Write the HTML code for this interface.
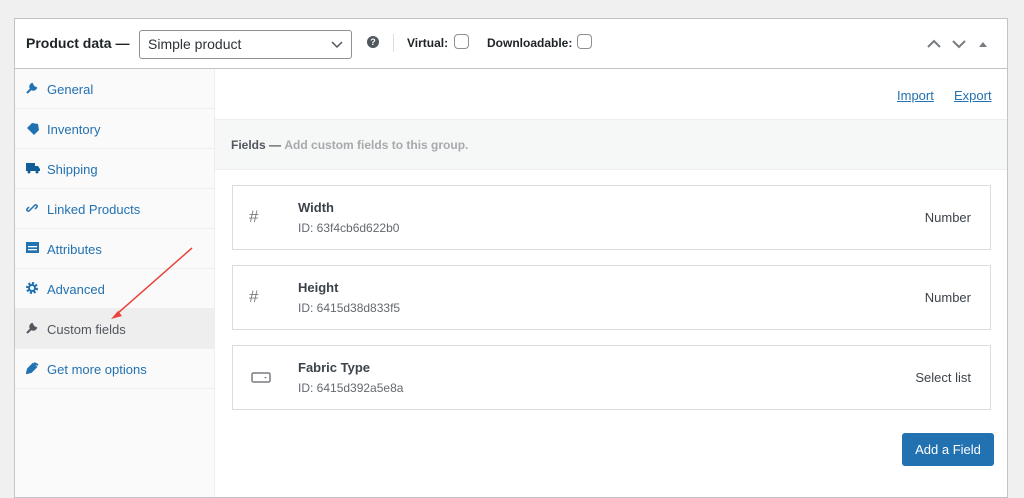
<!DOCTYPE html>
<html><head><style>
*{box-sizing:border-box;margin:0;padding:0}
body{width:1024px;height:485px;background:#f0f0f1;font-family:"Liberation Sans",sans-serif;font-size:13px;color:#3c434a;position:relative;overflow:hidden}
.panel{position:absolute;left:14px;top:18px;width:994px;height:480px;background:#fff;border:1px solid #c3c4c7}
.hdr{position:absolute;left:0;top:0;right:0;height:50px;border-bottom:1px solid #c3c4c7}
.abs{position:absolute}
.side{position:absolute;left:0;top:50px;width:200px;bottom:0;background:#fafafa;border-right:1px solid #eee}
.item{height:40px;border-bottom:1px solid #eee;color:#2271b1;font-size:13px;line-height:42px;padding-left:32px;position:relative}
.item svg{position:absolute;left:11px;top:13px}
.item.act{background:#eee;color:#50575e}
.card{position:absolute;left:217px;width:759px;height:65px;border:1px solid #dcdcde;background:#fff}
.card .t{position:absolute;left:65px;top:14px;font-weight:bold;font-size:13px;color:#3c434a}
.card .id{position:absolute;left:65px;top:35px;font-size:12px;color:#646970}
.card .ty{position:absolute;right:19px;top:24px;font-size:13px;color:#3c434a}
.card .ic{position:absolute;left:16px;top:21px;font-size:17px;color:#787c82}
</style></head><body>
<div class="panel">
 <div class="hdr">
  <div class="abs" style="left:11px;top:16px;font-weight:bold;font-size:14px;color:#1d2327">Product data —</div>
  <div class="abs" style="left:124px;top:11px;width:213px;height:29px;border:1px solid #8c8f94;border-radius:3px;font-size:14px;line-height:27px;padding-left:8px;color:#2c3338">Simple product
   <svg class="abs" style="right:8px;top:10px" width="12" height="8" viewBox="0 0 12 8"><path d="M1 1l5 5 5-5" stroke="#50575e" stroke-width="1.5" fill="none"/></svg></div>
  <div class="abs" style="left:352px;top:17px;width:12px;height:12px;border-radius:6px;background:#50575e;color:#fff;font-size:9px;font-weight:bold;text-align:center;line-height:12px">?</div>
  <div class="abs" style="left:378px;top:15px;width:1px;height:18px;background:#dcdcde"></div>
  <div class="abs" style="left:392px;top:17px;font-size:12px;font-weight:bold;color:#1d2327">Virtual:</div>
  <div class="abs" style="left:439px;top:15px;width:15px;height:15px;border:1px solid #8c8f94;border-radius:4px"></div>
  <div class="abs" style="left:472px;top:17px;font-size:12px;font-weight:bold;color:#1d2327">Downloadable:</div>
  <div class="abs" style="left:562px;top:15px;width:15px;height:15px;border:1px solid #8c8f94;border-radius:4px"></div>
  <svg class="abs" style="left:912px;top:20px" width="60" height="10" viewBox="0 0 60 10"><path d="M1 8l6-6 6 6M26 2l6 6 6-6" stroke="#787c82" stroke-width="2" fill="none"/><path d="M52 8l4-5 4 5z" fill="#787c82"/></svg>
 </div>
 <div class="side">
  <div class="item"><svg width="12" height="12" viewBox="0 0 12 12"><path d="M1 11l6-6M6 2a3 3 0 104 4L8 5 7 4z" stroke="#2271b1" stroke-width="2" fill="#2271b1"/></svg>General</div>
  <div class="item"><svg width="13" height="13" viewBox="0 0 13 13"><path d="M1 6l5-5 6 1 1 6-5 5z" fill="#2271b1"/></svg>Inventory</div>
  <div class="item"><svg width="14" height="12" viewBox="0 0 14 12"><path d="M0 1h9v8H0zM9 4h3l2 3v2H9z" fill="#135e96"/><circle cx="3" cy="10" r="1.5" fill="#135e96"/><circle cx="11" cy="10" r="1.5" fill="#135e96"/></svg>Shipping</div>
  <div class="item"><svg width="12" height="12" viewBox="0 0 12 12"><path d="M5 7l-2 2a1.5 1.5 0 01-2-2l2-2M7 5l2-2a1.5 1.5 0 012 2L9 7M4 8l4-4" stroke="#2271b1" stroke-width="1.5" fill="none"/></svg>Linked Products</div>
  <div class="item"><svg width="13" height="11" viewBox="0 0 13 11"><rect width="13" height="11" fill="#2271b1"/><rect x="2" y="4" width="9" height="1.3" fill="#fff"/><rect x="2" y="7" width="9" height="1.3" fill="#fff"/></svg>Attributes</div>
  <div class="item"><svg width="12" height="12" viewBox="0 0 12 12"><circle cx="6" cy="6" r="4.5" fill="none" stroke="#2271b1" stroke-width="3" stroke-dasharray="2 1.5"/><circle cx="6" cy="6" r="3" fill="none" stroke="#2271b1" stroke-width="2"/></svg>Advanced</div>
  <div class="item act"><svg width="12" height="12" viewBox="0 0 12 12"><path d="M1 11l6-6M6 2a3 3 0 104 4L8 5 7 4z" stroke="#50575e" stroke-width="2" fill="#50575e"/></svg>Custom fields</div>
  <div class="item"><svg width="13" height="12" viewBox="0 0 13 12"><path d="M1 11l4-1 5-5-3-3-5 5zM8 1l4 2" stroke="#2271b1" stroke-width="2" fill="#2271b1"/></svg>Get more options</div>
 </div>
 <div class="abs" style="left:200px;top:50px;right:0;height:51px;border-bottom:1px solid #eee"></div>
 <a class="abs" style="left:882px;top:69px;color:#2271b1;text-decoration:underline">Import</a>
 <a class="abs" style="left:939px;top:69px;color:#2271b1;text-decoration:underline">Export</a>
 <div class="abs" style="left:200px;top:101px;right:0;height:50px;background:#f6f7f7;border-bottom:1px solid #eee"></div>
 <div class="abs" style="left:216px;top:119px;font-size:12px;color:#50575e"><b>Fields —</b> <span style="color:#a7aaad;font-weight:bold">Add custom fields to this group.</span></div>
 <div class="card" style="top:166px"><div class="ic">#</div><div class="t">Width</div><div class="id">ID: 63f4cb6d622b0</div><div class="ty">Number</div></div>
 <div class="card" style="top:246px"><div class="ic">#</div><div class="t">Height</div><div class="id">ID: 6415d38d833f5</div><div class="ty">Number</div></div>
 <div class="card" style="top:326px"><svg class="abs" style="left:18px;top:26px" width="20" height="11" viewBox="0 0 20 11"><rect x="1" y="1" width="18" height="9" rx="1.5" fill="none" stroke="#787c82" stroke-width="1.5"/><path d="M13 5h3l-1.5 1.5z" fill="#787c82"/></svg><div class="t">Fabric Type</div><div class="id">ID: 6415d392a5e8a</div><div class="ty">Select list</div></div>
 <div class="abs" style="left:887px;top:414px;width:92px;height:33px;background:#2271b1;border-radius:3px;color:#fff;font-size:13px;line-height:33px;text-align:center">Add a Field</div>
</div>
<svg class="abs" style="left:0;top:0" width="1024" height="485"><path d="M192 248L118 313" stroke="#e8443a" stroke-width="1.5"/><path d="M111 319l11-3-4-5z" fill="#e8443a"/></svg>
</body></html>
